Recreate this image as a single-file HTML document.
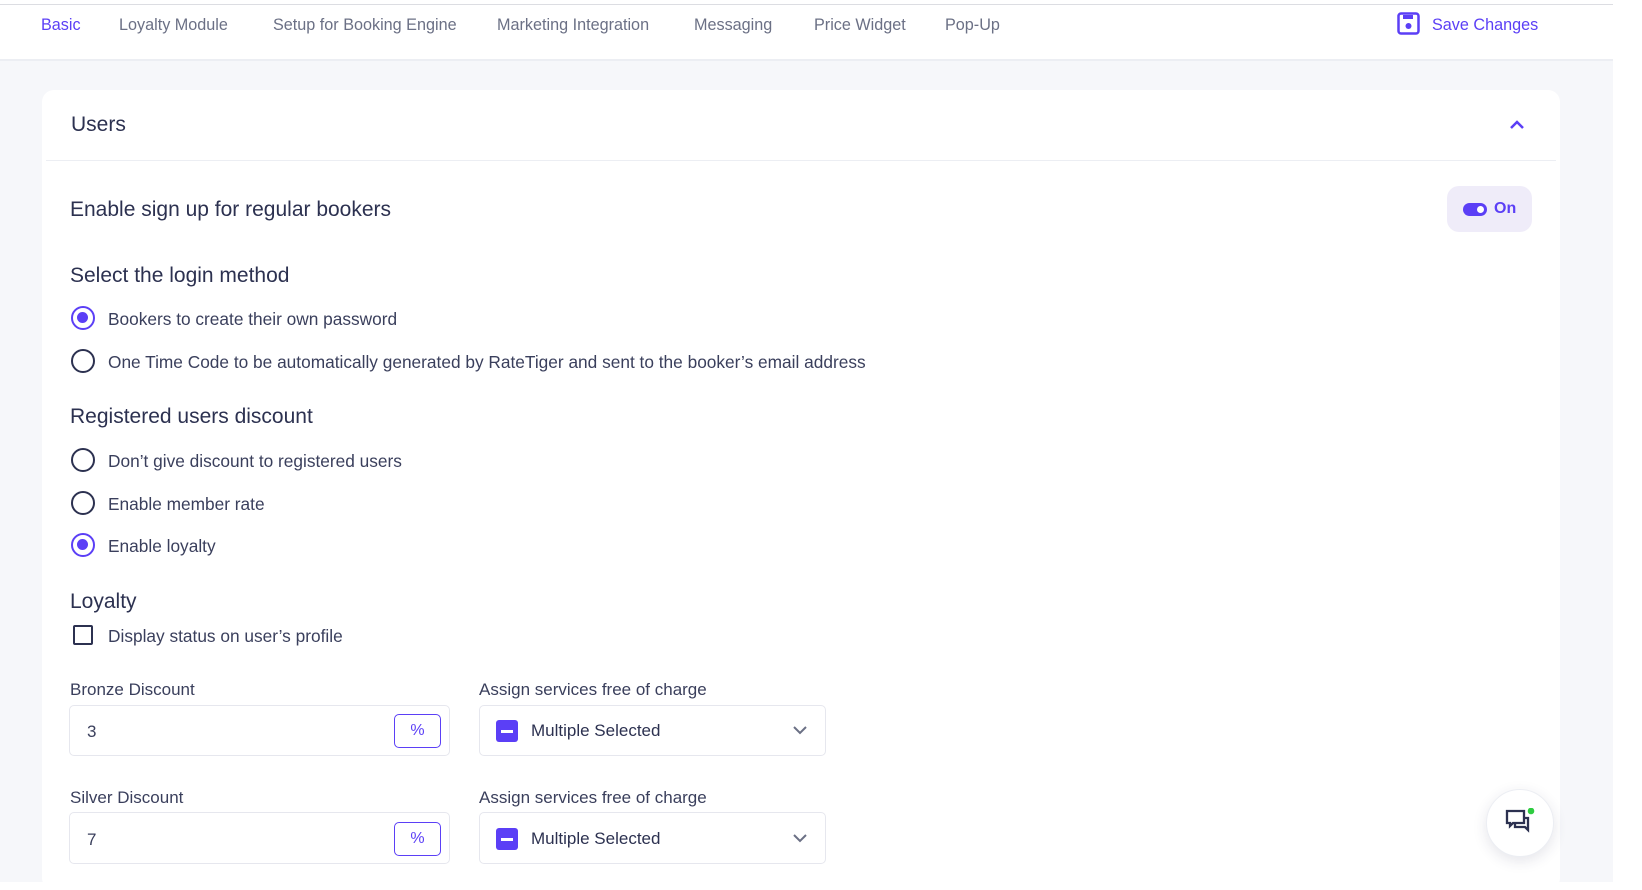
<!DOCTYPE html>
<html><head><meta charset="utf-8"><style>
*{margin:0;padding:0;box-sizing:border-box}
body{width:1642px;height:882px;overflow:hidden;background:#fff;font-family:"Liberation Sans",Arial,sans-serif;position:relative;color:#2c3150}
.a{position:absolute;white-space:nowrap}
.nav{font-size:16.2px;color:#6b7085;top:16px}
.h{font-size:21px;color:#2c3150}
.r{width:24px;height:24px;border:2.5px solid #2c3150;border-radius:50%}
.r.on{border-color:#5b3ff6}
.r.on::after{content:"";position:absolute;left:4px;top:4px;width:11px;height:11px;border-radius:50%;background:#5b3ff6}
.t{font-size:17.3px;color:#3a3f5c}
.inp{border:1px solid #e6e7ee;border-radius:5px;background:#fff}
.lbl{font-size:17px;color:#3a3f5c}
</style></head><body>
<div class="a" style="left:0;top:0;width:1613px;height:882px;background:#f6f7fa"></div>
<div class="a" style="left:0;top:0;width:1613px;height:61px;background:#fff;border-bottom:2px solid #eceef3"></div>
<div class="a" style="left:0;top:4px;width:1613px;height:1px;background:#dcdde2"></div>
<div class="a nav" style="left:41px;color:#5b3ff6">Basic</div>
<div class="a nav" style="left:119px">Loyalty Module</div>
<div class="a nav" style="left:273px">Setup for Booking Engine</div>
<div class="a nav" style="left:497px">Marketing Integration</div>
<div class="a nav" style="left:694px">Messaging</div>
<div class="a nav" style="left:814px">Price Widget</div>
<div class="a nav" style="left:945px">Pop-Up</div>
<svg class="a" style="left:1397px;top:12px" width="23" height="23" viewBox="0 0 23 23"><rect x="1.5" y="1.5" width="20" height="20" rx="2.5" fill="none" stroke="#5b3ff6" stroke-width="2.5"/><rect x="6" y="3" width="10" height="4" fill="#5b3ff6"/><circle cx="11.5" cy="14" r="3" fill="#5b3ff6"/></svg>
<div class="a nav" style="left:1432px;color:#5b3ff6">Save Changes</div>

<div class="a" style="left:42px;top:90px;width:1518px;height:800px;background:#fff;border-radius:12px"></div>
<div class="a" style="left:46px;top:160px;width:1510px;height:1px;background:#eceef3"></div>
<div class="a h" style="left:71px;top:113px">Users</div>
<svg class="a" style="left:1508px;top:119px" width="18" height="12" viewBox="0 0 18 12"><path d="M3 9 L9 3 L15 9" fill="none" stroke="#5b3ff6" stroke-width="2.5"/></svg>
<div class="a h" style="left:70px;top:198px">Enable sign up for regular bookers</div>
<div class="a" style="left:1447px;top:186px;width:85px;height:46px;background:#efecf9;border-radius:12px"></div>
<div class="a" style="left:1463px;top:203px;width:24px;height:13px;background:#5b3ff6;border-radius:7px"></div>
<div class="a" style="left:1477px;top:206px;width:7px;height:7px;background:#fff;border-radius:50%"></div>
<div class="a" style="left:1494px;top:200px;font-size:16px;color:#5b3ff6;font-weight:bold">On</div>

<div class="a h" style="left:70px;top:264px">Select the login method</div>
<div class="a r on" style="left:71px;top:306px"></div><div class="a t" style="left:108px;top:309px">Bookers to create their own password</div>
<div class="a r" style="left:71px;top:349px"></div><div class="a t" style="left:108px;top:352px">One Time Code to be automatically generated by RateTiger and sent to the booker’s email address</div>
<div class="a h" style="left:70px;top:405px">Registered users discount</div>
<div class="a r" style="left:71px;top:448px"></div><div class="a t" style="left:108px;top:451px">Don’t give discount to registered users</div>
<div class="a r" style="left:71px;top:491px"></div><div class="a t" style="left:108px;top:494px">Enable member rate</div>
<div class="a r on" style="left:71px;top:533px"></div><div class="a t" style="left:108px;top:536px">Enable loyalty</div>
<div class="a h" style="left:70px;top:590px">Loyalty</div>
<div class="a" style="left:73px;top:625px;width:20px;height:20px;border:2px solid #2c3150;border-radius:2px"></div>
<div class="a t" style="left:108px;top:626px">Display status on user’s profile</div>

<div class="a lbl" style="left:70px;top:680px">Bronze Discount</div>
<div class="a lbl" style="left:479px;top:680px">Assign services free of charge</div>
<div class="a inp" style="left:69px;top:705px;width:381px;height:51px"></div>
<div class="a" style="left:87px;top:722px;font-size:17px;color:#3a3f5c">3</div>
<div class="a" style="left:394px;top:714px;width:47px;height:34px;border:1.5px solid #5b3ff6;border-radius:5px;color:#5b3ff6;font-size:16px;text-align:center;line-height:31px">%</div>
<div class="a inp" style="left:479px;top:705px;width:347px;height:51px"></div>
<div class="a" style="left:496px;top:720px;width:22px;height:22px;background:#5b3ff6;border-radius:3px"></div>
<div class="a" style="left:501px;top:730px;width:12px;height:2.5px;background:#fff"></div>
<div class="a" style="left:531px;top:721px;font-size:17px;color:#2c3150">Multiple Selected</div>
<svg class="a" style="left:792px;top:724px" width="16" height="12" viewBox="0 0 16 12"><path d="M2 3 L8 9 L14 3" fill="none" stroke="#6b7085" stroke-width="2"/></svg>

<div class="a lbl" style="left:70px;top:788px">Silver Discount</div>
<div class="a lbl" style="left:479px;top:788px">Assign services free of charge</div>
<div class="a inp" style="left:69px;top:812px;width:381px;height:52px"></div>
<div class="a" style="left:87px;top:830px;font-size:17px;color:#3a3f5c">7</div>
<div class="a" style="left:394px;top:822px;width:47px;height:34px;border:1.5px solid #5b3ff6;border-radius:5px;color:#5b3ff6;font-size:16px;text-align:center;line-height:31px">%</div>
<div class="a inp" style="left:479px;top:812px;width:347px;height:52px"></div>
<div class="a" style="left:496px;top:828px;width:22px;height:22px;background:#5b3ff6;border-radius:3px"></div>
<div class="a" style="left:501px;top:838px;width:12px;height:2.5px;background:#fff"></div>
<div class="a" style="left:531px;top:829px;font-size:17px;color:#2c3150">Multiple Selected</div>
<svg class="a" style="left:792px;top:832px" width="16" height="12" viewBox="0 0 16 12"><path d="M2 3 L8 9 L14 3" fill="none" stroke="#6b7085" stroke-width="2"/></svg>

<div class="a" style="left:1486px;top:789px;width:68px;height:68px;border-radius:50%;background:#fff;border:1px solid #eceef3;box-shadow:0 4px 14px rgba(40,40,80,.12)"></div>
<svg class="a" style="left:1505px;top:808px" width="30" height="30" viewBox="0 0 30 30"><path d="M2 3 H19 V15 H8 L5 18 V15 H2 Z" fill="none" stroke="#2c3150" stroke-width="2.3"/><path d="M19 10 H23 V22 L20 19 H10 V15" fill="none" stroke="#2c3150" stroke-width="2.3"/><circle cx="26" cy="3" r="3.3" fill="#2ecc40"/></svg>
</body></html>
